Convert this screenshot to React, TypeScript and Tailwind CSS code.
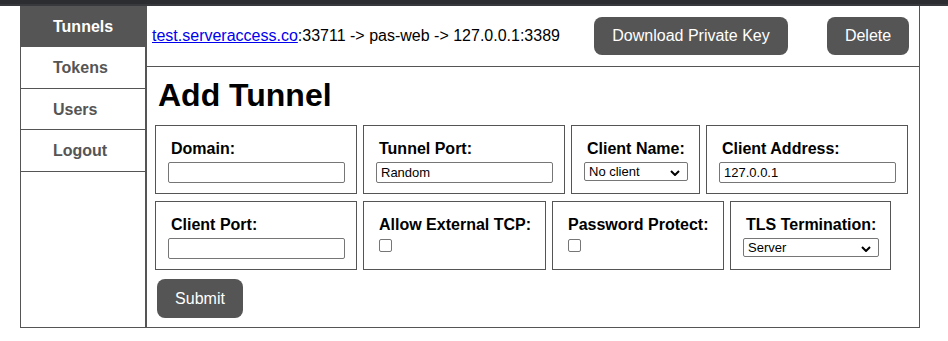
import React from "react";

const font = { fontFamily: '"Liberation Sans", Arial, sans-serif' };

function Chevron() {
  return (
    <svg width="10" height="6" viewBox="0 0 10 6" className="absolute right-[7px] top-[7px]">
      <polyline points="1,1 5,5 9,1" fill="none" stroke="#000" strokeWidth="2" />
    </svg>
  );
}

function Label({ children }: { children: React.ReactNode }) {
  return <div className="pl-[3px] font-bold text-[16px] leading-[21px] mb-[3px] text-black whitespace-nowrap">{children}</div>;
}

function TextInput({ value, w = "w-[177px]" }: { value?: string; w?: string }) {
  return (
    <div className={`${w} h-[21px] border border-[#767676] rounded-[2px] bg-white text-[13px] leading-[19px] pl-[4px] text-black`}>
      {value ?? ""}
    </div>
  );
}

function Select({ value, w }: { value: string; w: string }) {
  return (
    <div className={`relative ${w} h-[19px] border border-[#767676] rounded-[2px] bg-white text-[13px] leading-[17px] pl-[4px] text-black`}>
      {value}
      <Chevron />
    </div>
  );
}

function Check() {
  return <div className="w-[13px] h-[13px] mt-[4px] ml-[3px] border border-[#767676] rounded-[2px] bg-white" />;
}

function Box({ w, children }: { w: string; children: React.ReactNode }) {
  return <div className={`${w} border border-[#555] pt-[12px] px-[12px] pb-[10px]`}>{children}</div>;
}

export default function App() {
  const navItems = ["Tunnels", "Tokens", "Users", "Logout"];
  return (
    <div style={font} className="w-[948px] h-[341px] bg-white text-black overflow-hidden">
      <div className="h-[6px] bg-[#2c2d31] border-b-2 border-[#38393d]" />
      <div className="flex ml-[20px]">
        <div className="w-[126px] border-l border-r border-b border-[#555] flex flex-col">
          {navItems.map((n, i) => (
            <div
              key={n}
              className={`pl-[32px] pt-[12px] pb-[10px] leading-[18.4px] text-[16px] font-bold border-b border-[#555] ${
                i === 0 ? "bg-[#555] text-white" : "bg-white text-[#555]"
              }`}
            >
              {n}
            </div>
          ))}
        </div>
        <div className="w-[774px] border-l border-r border-b border-[#555]">
          <div className="h-[61px] border-b border-[#555] flex items-center pl-[5px] text-[16px]">
            <span className="whitespace-nowrap">
              <span className="text-[#0000EE] underline">test.serveraccess.co</span>
              :33711 -&gt; pas-web -&gt; 127.0.0.1:3389
            </span>
            <div className="ml-auto mr-[10px] flex gap-[39px]">
              <button className="w-[194px] h-[38px] rounded-[8px] bg-[#555] text-white text-[16px] leading-[38px] text-center">
                Download Private Key
              </button>
              <button className="w-[82px] h-[38px] rounded-[8px] bg-[#555] text-white text-[16px] leading-[38px] text-center">
                Delete
              </button>
            </div>
          </div>
          <div className="pl-[8px] pt-[10px] pb-[9px]">
            <h1 className="text-[32px] leading-[36px] font-bold mb-[12px] ml-[3px]">Add Tunnel</h1>
            <div className="flex gap-[6px]">
              <Box w="w-[202px]">
                <Label>Domain:</Label>
                <TextInput />
              </Box>
              <Box w="w-[202px]">
                <Label>Tunnel Port:</Label>
                <TextInput value="Random" />
              </Box>
              <Box w="w-[129px]">
                <Label>Client Name:</Label>
                <Select value="No client" w="w-[104px]" />
              </Box>
              <Box w="w-[202px]">
                <Label>Client Address:</Label>
                <TextInput value="127.0.0.1" />
              </Box>
            </div>
            <div className="flex gap-[6px] mt-[7px]">
              <Box w="w-[202px]">
                <Label>Client Port:</Label>
                <TextInput />
              </Box>
              <Box w="w-[183px]">
                <Label>Allow External TCP:</Label>
                <Check />
              </Box>
              <Box w="w-[172px]">
                <Label>Password Protect:</Label>
                <Check />
              </Box>
              <Box w="w-[161px]">
                <Label>TLS Termination:</Label>
                <Select value="Server" w="w-[136px]" />
              </Box>
            </div>
            <button className="mt-[9px] ml-[2px] w-[86px] h-[39px] rounded-[8px] bg-[#555] text-white text-[16px] leading-[39px] text-center">
              Submit
            </button>
          </div>
        </div>
      </div>
    </div>
  );
}
